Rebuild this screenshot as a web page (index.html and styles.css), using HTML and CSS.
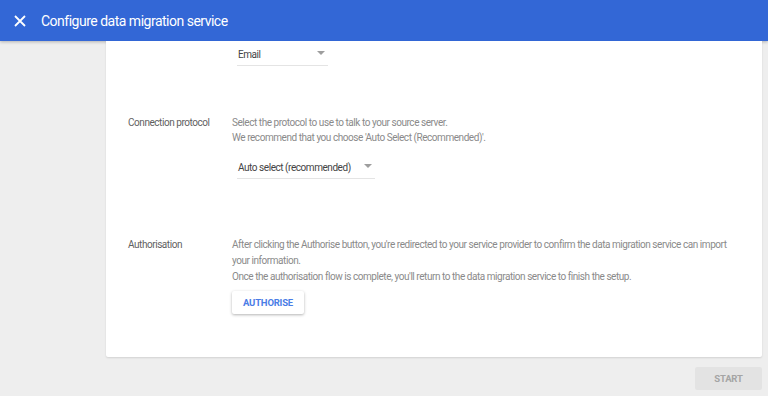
FILE: index.html
```html
<!DOCTYPE html>
<html lang="en">
<head>
    <meta charset="UTF-8">
    <meta name="viewport" content="width=device-width, initial-scale=1.0">
    <title>Configure data migration service</title>
    <link rel="stylesheet" href="styles.css">
</head>
<body>
    <header class="topbar">
        <svg class="close-icon" width="12" height="12" viewBox="0 0 12 12">
            <path d="M1 1 L11 11 M11 1 L1 11" stroke="#fff" stroke-width="1.8" fill="none"/>
        </svg>
        <span class="title">Configure data migration service</span>
    </header>

    <main class="page">
        <div class="card">
            <div class="row row-first">
                <div class="label"></div>
                <div class="content">
                    <div class="select select-email">
                        <span>Email</span>
                        <span class="arrow"></span>
                    </div>
                </div>
            </div>

            <div class="row row-protocol">
                <div class="label">Connection protocol</div>
                <div class="content">
                    <p class="desc">Select the protocol to use to talk to your source server.</p>
                    <p class="desc">We recommend that you choose 'Auto Select (Recommended)'.</p>
                    <div class="select select-protocol">
                        <span>Auto select (recommended)</span>
                        <span class="arrow"></span>
                    </div>
                </div>
            </div>

            <div class="row row-auth">
                <div class="label">Authorisation</div>
                <div class="content">
                    <p class="desc">After clicking the Authorise button, you're redirected to your service provider to confirm the data migration service can import your information.</p>
                    <p class="desc">Once the authorisation flow is complete, you'll return to the data migration service to finish the setup.</p>
                    <button type="button" class="auth-btn">Authorise</button>
                </div>
            </div>
        </div>

        <div class="actions">
            <button type="button" class="start-btn" disabled>Start</button>
        </div>
    </main>
</body>
</html>
```

FILE: styles.css
```css
* {
    box-sizing: border-box;
}
body {
    margin: 0;
    background-color: #eeeeee;
    font-family: Roboto, "Noto Sans", Arial, sans-serif;
    font-size: 10px;
    letter-spacing: -0.45px;
}
.topbar {
    height: 41px;
    background-color: #3367d6;
    display: flex;
    align-items: center;
    padding-left: 14px;
    box-shadow: 0 1px 3px rgba(0, 0, 0, 0.25);
}
.close-icon {
    display: block;
}
.title {
    color: #fff;
    font-size: 14px;
    letter-spacing: -0.5px;
    margin-left: 15px;
}
.page {
    padding-left: 106px;
    padding-right: 6px;
}
.card {
    background-color: #fff;
    padding: 2px 22px 43px;
    border-radius: 0 0 2px 2px;
    box-shadow: 0 1px 2px rgba(0, 0, 0, 0.12);
}
.row {
    display: flex;
}
.label {
    width: 104px;
    flex-shrink: 0;
    color: #5f5f5f;
    line-height: 16px;
}
.content {
    flex: 1;
}
.row-protocol {
    margin-top: 49px;
}
.row-protocol .desc {
    line-height: 15px;
}
.row-auth {
    margin-top: 58px;
}
.desc {
    margin: 0;
    color: #8a8a8a;
    line-height: 16px;
}
.select {
    display: flex;
    align-items: center;
    justify-content: space-between;
    height: 23px;
    margin-left: 5px;
    padding-left: 1px;
    padding-right: 3px;
    border-bottom: 1px solid #e4e4e4;
    color: #444;
}
.select-email {
    width: 91px;
}
.select-protocol {
    width: 138px;
    margin-top: 11px;
}
.arrow {
    width: 0;
    height: 0;
    border-left: 4px solid transparent;
    border-right: 4px solid transparent;
    border-top: 4px solid #9e9e9e;
    margin-top: -3px;
}
.auth-btn {
    margin-top: 6px;
    height: 23px;
    width: 72px;
    background-color: #fff;
    border: none;
    border-radius: 2px;
    box-shadow: 0 1px 3px rgba(0, 0, 0, 0.3);
    color: #4a7de6;
    font-family: Roboto, Arial, sans-serif;
    font-size: 9.5px;
    font-weight: bold;
    text-transform: uppercase;
    letter-spacing: -0.2px;
    padding: 0;
}
.actions {
    display: flex;
    justify-content: flex-end;
    margin-top: 10px;
}
.start-btn {
    width: 67px;
    height: 23px;
    background-color: #e3e3e3;
    border: none;
    border-radius: 2px;
    color: #a5a5a5;
    font-family: Roboto, Arial, sans-serif;
    font-size: 9.5px;
    font-weight: bold;
    text-transform: uppercase;
    letter-spacing: -0.2px;
    padding: 0;
}
```
